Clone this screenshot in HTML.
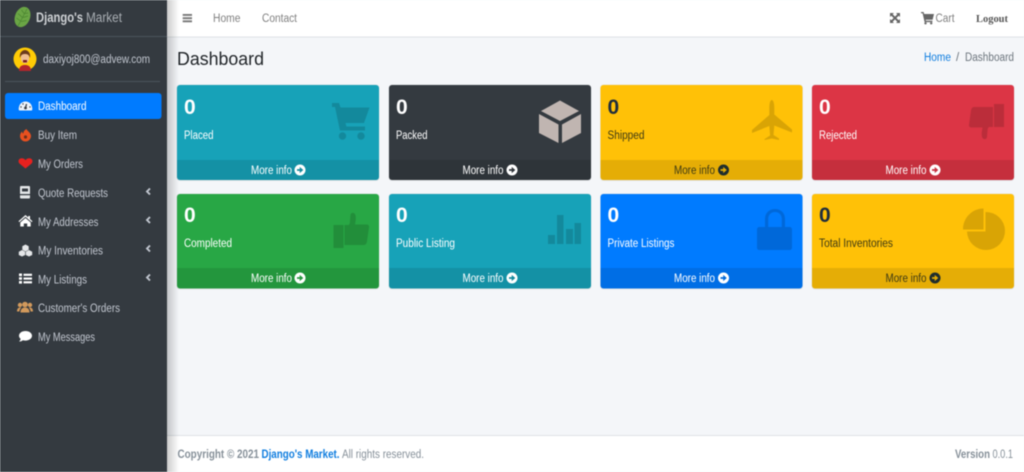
<!DOCTYPE html>
<html lang="en">
<head>
<meta charset="utf-8">
<title>Dashboard</title>
<style>
html,body{margin:0;padding:0;width:1024px;height:472px;overflow:hidden;background:#f4f6f9}
svg{display:block;filter:blur(.5px)}
text{font-family:"Liberation Sans",sans-serif;font-size:11.500px}
.m text{fill:#c2c7d0}
.l{fill:#fff}
.n{font-size:21px;font-weight:bold;fill:#fff}
.d{fill:#1f2d3d}
.s{fill:#000;fill-opacity:.07}
</style>
</head>
<body>
<svg width="1024" height="472" viewBox="0 0 1024 472" xmlns="http://www.w3.org/2000/svg">
<defs>
<linearGradient id="sh" x1="0" x2="1" y1="0" y2="0"><stop offset="0" stop-color="#000" stop-opacity=".2"/><stop offset="1" stop-color="#000" stop-opacity="0"/></linearGradient>
<g id="arr"><circle r="5.500"/><path d="M-3 -.9h2.700v-2.200L3.300 0-.3 3.100V.9H-3z" fill="var(--a)"/></g>
</defs>

<!-- page -->
<rect width="1024" height="472" fill="#f4f6f9"/>
<rect x="167" width="857" height="37" fill="#fff"/>
<rect x="167" y="36.500" width="857" height="1" fill="#dee2e6"/>
<rect x="167" y="435" width="857" height="37" fill="#fff"/>
<rect x="167" y="435" width="857" height="1" fill="#dee2e6"/>
<rect x="167" width="12" height="472" fill="url(#sh)"/>

<!-- sidebar -->
<rect width="167" height="472" fill="#343a40"/>
<rect y="36" width="167" height="1" fill="#4b545c"/>
<rect x="5" y="81" width="155" height="1" fill="#4b545c"/>
<ellipse cx="22.500" cy="17" rx="7.500" ry="10.500" transform="rotate(22 22.500 17)" fill="#6aa545"/>
<path d="M18 26L27 9M20.500 21l-4-3M22.500 17.500l-4.500-4M24.500 14l-3-4M21 21.500l5.500-1M23 17.500l5-1.500M25 13.500l3-.5" stroke="#4a8430" stroke-width=".7" fill="none"/>
<text x="36" y="22" textLength="47" lengthAdjust="spacingAndGlyphs" style="font-size:13.500px;font-weight:bold;fill:#cfd2d5">Django's</text>
<text x="86" y="22" textLength="36" lengthAdjust="spacingAndGlyphs" style="font-size:13.500px;fill:#a9aeb3">Market</text>

<circle cx="25" cy="59" r="11.500" fill="#ffcb05"/>
<path d="M19 71c0-5 3-6 6-6s6 1 6 6z" fill="#b3262c"/>
<ellipse cx="25" cy="58" rx="4.200" ry="5.500" fill="#eebd92"/>
<path d="M20 58c-1-6 3-8 5-8s6 2 5 8c-1-3-2-4-5-4s-4 1-5 4z" fill="#6b3a1c"/>
<path d="M23 60h4v2.500h-4z" fill="#7a2020"/>
<text x="43" y="63" textLength="107" lengthAdjust="spacingAndGlyphs" fill="#c2c7d0">daxiyoj800@advew.com</text>

<rect x="5" y="93" width="156.500" height="26" rx="3" fill="#007bff"/>

<g class="m">
<text x="38" y="110" textLength="48.500" lengthAdjust="spacingAndGlyphs" style="fill:#fff">Dashboard</text>
<text x="38" y="139" textLength="39" lengthAdjust="spacingAndGlyphs">Buy Item</text>
<text x="38" y="168" textLength="45" lengthAdjust="spacingAndGlyphs">My Orders</text>
<text x="38" y="197" textLength="70" lengthAdjust="spacingAndGlyphs">Quote Requests</text>
<text x="38" y="226" textLength="60.500" lengthAdjust="spacingAndGlyphs">My Addresses</text>
<text x="38" y="254.500" textLength="65" lengthAdjust="spacingAndGlyphs">My Inventories</text>
<text x="38" y="283.500" textLength="49" lengthAdjust="spacingAndGlyphs">My Listings</text>
<text x="38" y="312" textLength="82" lengthAdjust="spacingAndGlyphs">Customer's Orders</text>
<text x="38" y="341" textLength="57" lengthAdjust="spacingAndGlyphs">My Messages</text>
</g>

<!-- sidebar icons -->
<path d="M20 110.500c-.8 0-1.300-.5-1.300-1.300 0-4.500 2.800-7.700 6.800-7.700s6.800 3.200 6.800 7.700c0 .8-.5 1.300-1.300 1.300z" fill="#eef3fa"/>
<path d="M25.500 108l1-4" stroke="#343a40" stroke-width="1.300"/><circle cx="25.500" cy="108" r="1.400" fill="#343a40"/><circle cx="21" cy="107" r=".7" fill="#343a40"/><circle cx="30" cy="107" r=".7" fill="#343a40"/><circle cx="23" cy="104" r=".7" fill="#343a40"/>
<path d="M26.500 129c.5 2 4.500 3.500 4.500 7a5.500 5.500 0 0 1-11 0c0-2 1-3.500 2-4.500.2 1 .6 1.800 1.300 2 0-2 1.200-3.500 3.200-4.500z" fill="#e8501f"/>
<circle cx="25.500" cy="137" r="1.600" fill="#6b2f1c"/>
<path d="M25.500 168.500l-5.800-4.800c-2.200-2-1.200-5.300 1.800-5.500 1.700-.1 3.100.7 4 2 .9-1.300 2.300-2.100 4-2 3 .2 4 3.500 1.800 5.500z" fill="#e8211f"/>
<rect x="20" y="186" width="10" height="12.500" rx="1" fill="#e4e6e8"/><path d="M22 188.500h6v3h-6zM20 194h10v1.300H20z" fill="#343a40"/>
<path d="M25.500 215l-7 6.200.8.900 6.200-5.400 6.200 5.400.8-.9-2.500-2.200v-3h-1.800v1.500zM20.300 222.500v4h3.500v-3h3.400v3h3.500v-4l-5.200-4.500z" fill="#fff"/>
<path d="M25.500 244.500l3.200 1.800v3.500l-3.200 1.700-3.200-1.700v-3.500zM22 250l3.200 1.800v3.200L22 256.500l-3.200-1.500v-3.200zM29 250l3.200 1.800v3.200l-3.200 1.500-3.200-1.500v-3.200z" fill="#e4e6e8"/>
<path d="M19 273.500h3v2.600h-3zM23.500 273.800H32v2.100h-8.500zM19 277.200h3v2.600h-3zM23.500 277.500H32v2.100h-8.500zM19 281h3v2.600h-3zM23.500 281.300H32v2.100h-8.500z" fill="#fff"/>
<g fill="#d39a5c"><circle cx="25" cy="304.500" r="2.800"/><circle cx="20" cy="305" r="2.200"/><circle cx="30" cy="305" r="2.200"/><path d="M20.500 312.500c0-3.500 2-5 4.500-5s4.500 1.500 4.500 5zM17 311.500c0-2.500 1-4 3.200-4 .4 0 .8.100 1 .2-1 .9-1.700 2.200-1.800 3.800zM33 311.500c0-2.500-1-4-3.200-4-.4 0-.8.100-1 .2 1 .9 1.700 2.200 1.800 3.800z"/></g>
<path d="M25.500 331c3.600 0 6.500 2.100 6.500 4.800s-2.900 4.800-6.500 4.800c-.9 0-1.800-.1-2.600-.4-1 .8-2.300 1.300-3.800 1.300.9-.8 1.400-1.700 1.500-2.600-1-.9-1.600-1.900-1.600-3.100 0-2.700 2.900-4.800 6.500-4.800z" fill="#fff"/>
<g fill="none" stroke="#c2c7d0" stroke-width="1.900">
<path d="M150 188.500l-3 3 3 3M150 217l-3 3 3 3M150 245.500l-3 3 3 3M150 274.500l-3 3 3 3"/>
</g>

<!-- navbar -->
<path d="M182.700 14h9.300v1.900h-9.300zM182.700 17.200h9.300v1.900h-9.300zM182.700 20.400h9.300v1.900h-9.300z" fill="#777"/>
<text x="213" y="22" textLength="27.500" lengthAdjust="spacingAndGlyphs" fill="#808080">Home</text>
<text x="262" y="22" textLength="35" lengthAdjust="spacingAndGlyphs" fill="#808080">Contact</text>
<path d="M890 13h4l-1.300 1.300L895 16.600l2.300-2.300L896 13h4v4l-1.300-1.300-2.300 2.300 2.300 2.300L900 19v4h-4l1.300-1.300-2.300-2.300-2.300 2.300L894 23h-4v-4l1.300 1.300L893.600 18l-2.300-2.300L890 17z" fill="#666"/>
<path d="M921 12h2.600l.5 2H934l-1.400 5.700h-7l.3 1.100h6.500v1.300h-7.800L922.600 13.300H921z" fill="#666"/><circle cx="925.500" cy="23.300" r="1.200" fill="#666"/><circle cx="931.200" cy="23.300" r="1.200" fill="#666"/>
<text x="935.500" y="22" textLength="19" lengthAdjust="spacingAndGlyphs" fill="#808080">Cart</text>
<text x="976" y="22" textLength="32" lengthAdjust="spacingAndGlyphs" style="font-family:'Liberation Serif',serif;font-weight:bold;font-size:11px;fill:#555">Logout</text>

<!-- header -->
<text x="177" y="65" textLength="87" lengthAdjust="spacingAndGlyphs" style="font-size:18.500px;fill:#212529">Dashboard</text>
<text x="924" y="61" textLength="27" lengthAdjust="spacingAndGlyphs" fill="#0f7ddf">Home</text>
<text x="956" y="61" fill="#6c757d">/</text>
<text x="965" y="61" textLength="49" lengthAdjust="spacingAndGlyphs" fill="#6c757d">Dashboard</text>

<!-- card 1 -->
<rect class="s" x="176.500" y="84.500" width="203" height="96.500" rx="3.500"/>
<rect x="177" y="85" width="202" height="95" rx="3" fill="#17a2b8"/>
<path d="M177 160h202v17a3 3 0 0 1-3 3H180a3 3 0 0 1-3-3z" fill="#000" fill-opacity=".1"/>
<text class="n" x="184" y="114">0</text>
<text class="l" x="184" y="139" textLength="29.500" lengthAdjust="spacingAndGlyphs">Placed</text>
<text x="251" y="174" textLength="41" lengthAdjust="spacingAndGlyphs" fill="#fff">More info</text>
<use href="#arr" x="300" y="170" fill="#fff" style="--a:#148a9d"/>
<path d="M332 103h7l1.500 4.500H369.500L364 123H345.500l.9 3.500H365v4h-25l-1-4.500-4-19h-3z" fill="#000" fill-opacity=".15"/><circle cx="342.500" cy="136" r="3.700" fill="#000" fill-opacity=".15"/><circle cx="361" cy="136" r="3.700" fill="#000" fill-opacity=".15"/>

<!-- card 2 -->
<rect class="s" x="388.500" y="84.500" width="203" height="96.500" rx="3.500"/>
<rect x="389" y="85" width="202" height="95" rx="3" fill="#343a40"/>
<path d="M389 160h202v17a3 3 0 0 1-3 3H392a3 3 0 0 1-3-3z" fill="#000" fill-opacity=".1"/>
<text class="n" x="396" y="114">0</text>
<text class="l" x="396" y="139" textLength="31.500" lengthAdjust="spacingAndGlyphs">Packed</text>
<text x="462.500" y="174" textLength="41" lengthAdjust="spacingAndGlyphs" fill="#fff">More info</text>
<use href="#arr" x="512" y="170" fill="#fff" style="--a:#2f3439"/>
<path d="M560 100.500l19 10.500-19 10-19-10zM539 114l19.500 10.500V143L539 133zM581 114v19l-19 10v-18.500z" fill="#c0b5b1"/>

<!-- card 3 -->
<rect class="s" x="600" y="84.500" width="203" height="96.500" rx="3.500"/>
<rect x="600.500" y="85" width="202" height="95" rx="3" fill="#ffc107"/>
<path d="M600.500 160h202v17a3 3 0 0 1-3 3h-196a3 3 0 0 1-3-3z" fill="#000" fill-opacity=".1"/>
<text class="n d" x="607.500" y="114">0</text>
<text x="607.500" y="139" textLength="37" lengthAdjust="spacingAndGlyphs" fill="#3e3a14">Shipped</text>
<text x="674" y="174" textLength="41" lengthAdjust="spacingAndGlyphs" fill="#3e3a14">More info</text>
<use href="#arr" x="723.500" y="170" fill="#1f2d2d" style="--a:#e6ae06"/>
<path d="M771.800 100c1.600 0 2.500 3.500 2.500 8v6.500L792 129.500v3l-17.700-7-.8 9.500 5.500 3.500v1.500l-7.200-1.500-7.200 1.500V139l5.500-3.500-.8-9.500-17.300 7v-3l17.300-15V108c0-4.500 .9-8 2.500-8z" fill="#000" fill-opacity=".15"/>

<!-- card 4 -->
<rect class="s" x="811.500" y="84.500" width="203" height="96.500" rx="3.500"/>
<rect x="812" y="85" width="202" height="95" rx="3" fill="#dc3545"/>
<path d="M812 160h202v17a3 3 0 0 1-3 3H815a3 3 0 0 1-3-3z" fill="#000" fill-opacity=".1"/>
<text class="n" x="819" y="114">0</text>
<text class="l" x="819" y="139" textLength="38" lengthAdjust="spacingAndGlyphs">Rejected</text>
<text x="885.500" y="174" textLength="41" lengthAdjust="spacingAndGlyphs" fill="#fff">More info</text>
<use href="#arr" x="935" y="170" fill="#fff" style="--a:#c62f3f"/>
<path d="M994 104h10v23h-10zM974 107h19v20h-4c-1 .5-1.500 2-1.500 4l-.5 6c-.2 2-1.800 2.500-3.200 2-2-.7-2.300-4-2-7l.7-4.500H971c-1.500 0-2.300-1.500-2-3l2-14c.3-2 1.500-3.500 3-3.500z" fill="#000" fill-opacity=".15"/>

<!-- card 5 -->
<rect class="s" x="176.500" y="193.500" width="203" height="96" rx="3.500"/>
<rect x="177" y="194" width="202" height="94.500" rx="3" fill="#28a745"/>
<path d="M177 268h202v17.500a3 3 0 0 1-3 3H180a3 3 0 0 1-3-3z" fill="#000" fill-opacity=".1"/>
<text class="n" x="184" y="222">0</text>
<text class="l" x="184" y="247" textLength="48" lengthAdjust="spacingAndGlyphs">Completed</text>
<text x="251" y="282" textLength="41" lengthAdjust="spacingAndGlyphs" fill="#fff">More info</text>
<use href="#arr" x="300" y="278" fill="#fff" style="--a:#24963e"/>
<path d="M333.500 225h10v23h-10zM344.500 225h4c1-.5 1.500-2 1.500-4l.5-6c.2-2 1.800-2.500 3.200-2 2 .7 2.300 4 2 7l-.7 4.500H367c1.500 0 2.300 1.500 2 3l-2 14c-.3 2-1.500 3.500-3 3.500h-19.500z" fill="#000" fill-opacity=".15"/>

<!-- card 6 -->
<rect class="s" x="388.500" y="193.500" width="203" height="96" rx="3.500"/>
<rect x="389" y="194" width="202" height="94.500" rx="3" fill="#17a2b8"/>
<path d="M389 268h202v17.500a3 3 0 0 1-3 3H392a3 3 0 0 1-3-3z" fill="#000" fill-opacity=".1"/>
<text class="n" x="396" y="222">0</text>
<text class="l" x="396" y="247" textLength="59" lengthAdjust="spacingAndGlyphs">Public Listing</text>
<text x="462.500" y="282" textLength="41" lengthAdjust="spacingAndGlyphs" fill="#fff">More info</text>
<use href="#arr" x="512" y="278" fill="#fff" style="--a:#148a9d"/>
<path d="M548 235h7v9h-7zM557 215h6.500v29H557zM566 229h7v15h-7zM574.500 223h6.500v21h-6.500z" fill="#000" fill-opacity=".15"/>

<!-- card 7 -->
<rect class="s" x="600" y="193.500" width="203" height="96" rx="3.500"/>
<rect x="600.500" y="194" width="202" height="94.500" rx="3" fill="#007bff"/>
<path d="M600.500 268h202v17.500a3 3 0 0 1-3 3h-196a3 3 0 0 1-3-3z" fill="#000" fill-opacity=".1"/>
<text class="n" x="607.500" y="222">0</text>
<text class="l" x="607.500" y="247" textLength="67" lengthAdjust="spacingAndGlyphs">Private Listings</text>
<text x="674" y="282" textLength="41" lengthAdjust="spacingAndGlyphs" fill="#fff">More info</text>
<use href="#arr" x="723.500" y="278" fill="#fff" style="--a:#0069d9"/>
<path d="M759.500 227h30c1.500 0 2.500 1 2.500 2.500V247.500c0 1.500-1 2.500-2.500 2.500h-30c-1.500 0-2.500-1-2.500-2.500V229.500c0-1.500 1-2.500 2.500-2.500zM765 227v-8c0-6 4-10 10-10s10 4 10 10v8h-3.200v-8c0-4-2.800-7-6.800-7s-6.800 3-6.800 7v8z" fill="#000" fill-opacity=".15"/>

<!-- card 8 -->
<rect class="s" x="811.500" y="193.500" width="203" height="96" rx="3.500"/>
<rect x="812" y="194" width="202" height="94.500" rx="3" fill="#ffc107"/>
<path d="M812 268h202v17.500a3 3 0 0 1-3 3H815a3 3 0 0 1-3-3z" fill="#000" fill-opacity=".1"/>
<text class="n d" x="819" y="222">0</text>
<text x="819" y="247" textLength="74" lengthAdjust="spacingAndGlyphs" fill="#3e3a14">Total Inventories</text>
<text x="885.500" y="282" textLength="41" lengthAdjust="spacingAndGlyphs" fill="#3e3a14">More info</text>
<use href="#arr" x="935" y="278" fill="#1f2d2d" style="--a:#e6ae06"/>
<path d="M983.500 208.500V229.500H963c0-11.500 9-21 20.500-21zM985.500 212a19 19 0 1 1-18.500 19.500h18.500z" fill="#000" fill-opacity=".15"/>

<!-- footer -->
<text x="177.500" y="458" textLength="81.500" lengthAdjust="spacingAndGlyphs" style="font-weight:bold;fill:#869099">Copyright © 2021</text>
<text x="261.500" y="458" textLength="78" lengthAdjust="spacingAndGlyphs" style="font-weight:bold;fill:#0f7ddf">Django's Market.</text>
<text x="342" y="458" textLength="82" lengthAdjust="spacingAndGlyphs" fill="#869099">All rights reserved.</text>
<text x="955" y="458" textLength="35" lengthAdjust="spacingAndGlyphs" style="font-weight:bold;fill:#869099">Version</text>
<text x="992.500" y="458" textLength="20.500" lengthAdjust="spacingAndGlyphs" fill="#869099">0.0.1</text>
</svg>
</body>
</html>
